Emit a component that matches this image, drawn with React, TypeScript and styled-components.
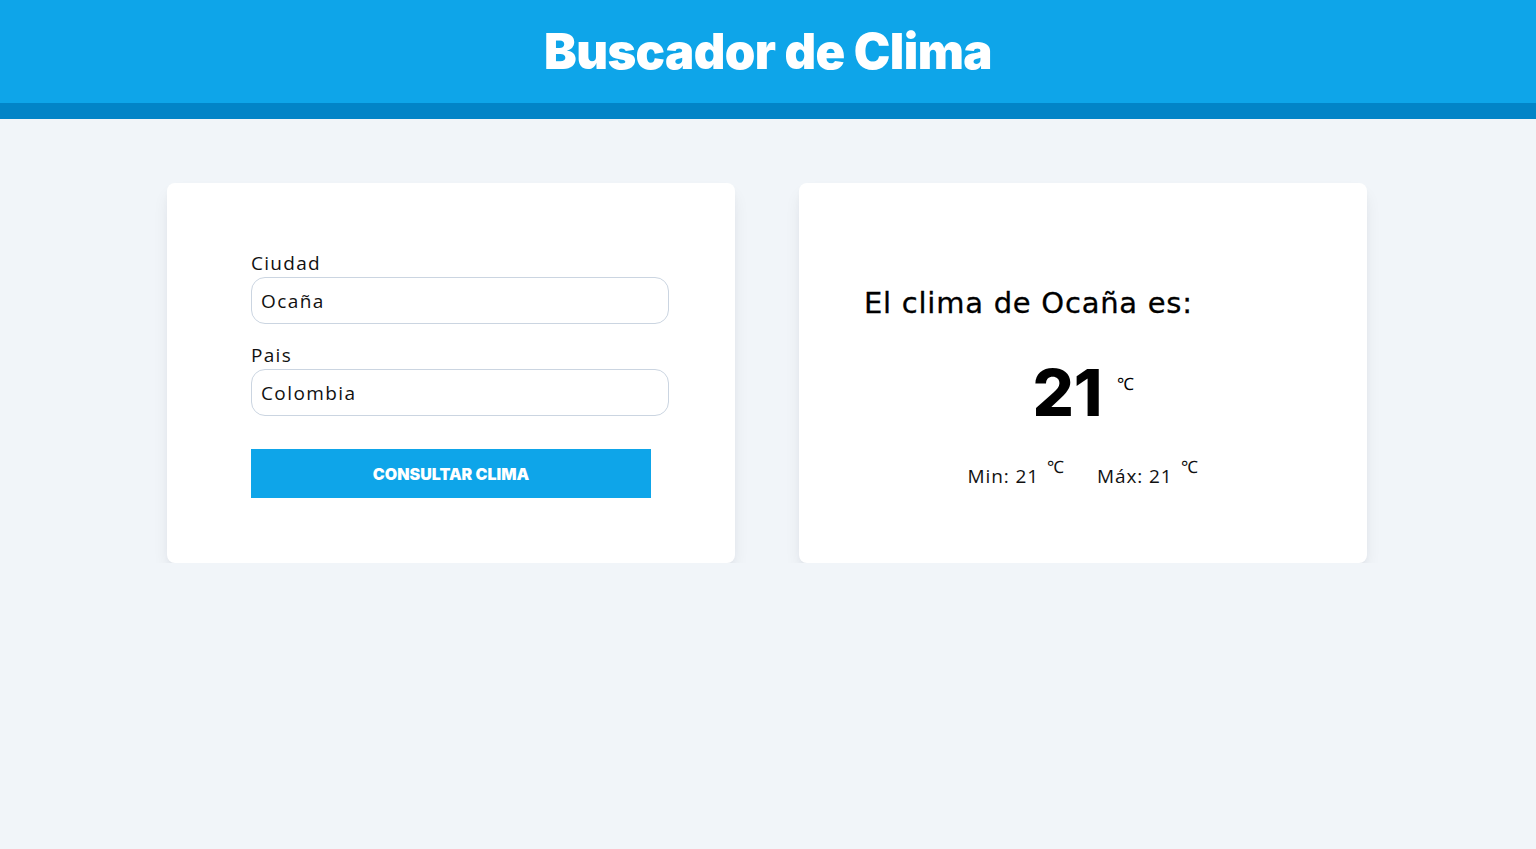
import React from "react";
import styled, { createGlobalStyle } from "styled-components";

const GlobalStyle = createGlobalStyle`
  body {
    margin: 0;
    background: #f1f5f9;
    font-family: "Open Sans", "Liberation Sans", sans-serif;
  }
  * {
    box-sizing: border-box;
  }
`;

const Header = styled.header`
  background: #0ea5e9;
  border-bottom: 16px solid #0284c7;
  height: 119px;
  display: flex;
  align-items: flex-start;
  justify-content: center;
`;

const Title = styled.h1`
  margin: 0;
  padding-top: 22px;
  color: #fff;
  font-family: Inter, "Liberation Sans", sans-serif;
  font-weight: 900;
  font-size: 49px;
  letter-spacing: -0.6px;
  line-height: 60px;
`;

const Container = styled.main`
  width: 1200px;
  margin: 64px 0 0 calc(50% - 601px);
  display: grid;
  grid-template-columns: 568px 568px;
  gap: 64px;
`;

const Card = styled.section`
  background: #fff;
  border-radius: 8px;
  height: 380px;
  box-shadow: 0 10px 18px -3px rgba(15, 23, 42, 0.09),
    0 4px 8px -4px rgba(15, 23, 42, 0.07);
`;

const Form = styled.form`
  padding: 66px 66px 0 84px;
  display: flex;
  flex-direction: column;
`;

const Field = styled.div`
  display: flex;
  flex-direction: column;
  margin-bottom: 17px;
`;

const Label = styled.label`
  font-size: 19px;
  font-weight: 400;
  color: #111;
  letter-spacing: 1.3px;
  line-height: 28px;
`;

const Input = styled.input`
  height: 47px;
  border: 1px solid #cbd5e1;
  border-radius: 14px;
  padding: 0 9px;
  font-family: "Open Sans", sans-serif;
  font-size: 19px;
  font-weight: 400;
  letter-spacing: 1.4px;
  color: #111;
  outline: none;
`;

const Button = styled.button`
  width: 400px;
  height: 49px;
  margin-top: 16px;
  border: none;
  background: #0ea5e9;
  color: #fff;
  font-family: Inter, "Liberation Sans", sans-serif;
  font-weight: 900;
  font-size: 16px;
  letter-spacing: 0;
  text-transform: uppercase;
  cursor: pointer;
`;

const Result = styled(Card)`
  display: flex;
  flex-direction: column;
  justify-content: center;
  padding: 28px 0 0;
`;

const ResultTitle = styled.h2`
  margin: 0 0 40px;
  padding-left: 65px;
  font-family: "DejaVu Sans", sans-serif;
  font-weight: 400;
  font-size: 29px;
  letter-spacing: 0.75px;
  -webkit-text-stroke: 0.3px #000;
  color: #000;
`;

const Temp = styled.p`
  margin: 0;
  text-align: center;
  font-family: Inter, "Liberation Sans", sans-serif;
  font-weight: 800;
  font-size: 65px;
  line-height: 1;
  color: #000;
`;

const Unit = styled.sup<{ $big?: boolean }>`
  font-family: "Liberation Serif", serif;
  font-weight: 400;
  font-size: 17px;
  margin-left: ${(p) => (p.$big ? 14 : 8)}px;
  vertical-align: ${(p) => (p.$big ? "26px" : "10px")};
`;

const Range = styled.div`
  margin-top: 30px;
  display: flex;
  justify-content: center;
  gap: 32px;
  font-size: 19px;
  font-weight: 400;
  letter-spacing: 0.9px;
  color: #111;
`;

export default function App() {
  return (
    <>
      <GlobalStyle />
      <Header>
        <Title>Buscador de Clima</Title>
      </Header>
      <Container>
        <Card>
          <Form onSubmit={(e) => e.preventDefault()}>
            <Field>
              <Label htmlFor="ciudad">Ciudad</Label>
              <Input id="ciudad" defaultValue="Ocaña" />
            </Field>
            <Field>
              <Label htmlFor="pais">Pais</Label>
              <Input id="pais" defaultValue="Colombia" />
            </Field>
            <Button type="submit">Consultar Clima</Button>
          </Form>
        </Card>
        <Result>
          <ResultTitle>El clima de Ocaña es:</ResultTitle>
          <Temp>
            21<Unit $big>℃</Unit>
          </Temp>
          <Range>
            <span>
              Min: 21<Unit>℃</Unit>
            </span>
            <span>
              Máx: 21<Unit>℃</Unit>
            </span>
          </Range>
        </Result>
      </Container>
    </>
  );
}
